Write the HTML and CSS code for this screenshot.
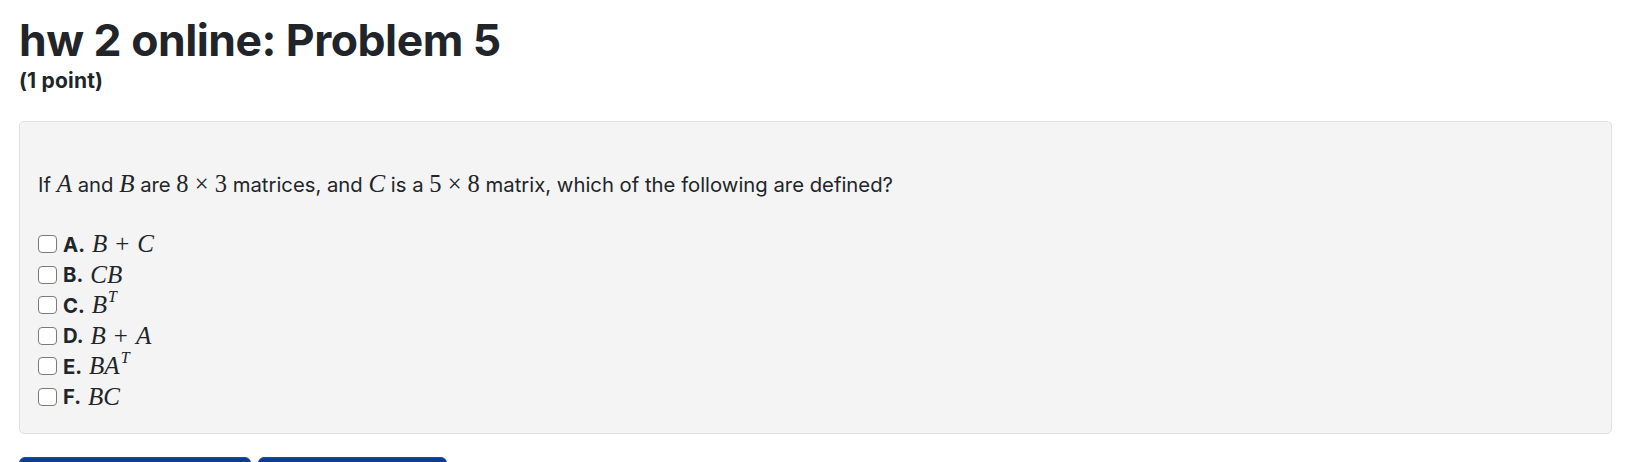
FILE: index.html
```html
<!DOCTYPE html>
<html lang="en">
<head>
  <meta charset="UTF-8">
  <meta name="viewport" content="width=device-width, initial-scale=1.0">
  <title>hw 2 online: Problem 5</title>
  <link rel="stylesheet" href="styles.css">
</head>
<body>
  <div class="page">
    <h1 class="problem-title">hw 2 online: Problem 5</h1>
    <div class="points">(1 point)</div>

    <!-- Problem text -->
    <div class="problem-body">
      <p class="question">
        If <span class="math">A</span> and <span class="math">B</span> are
        <span class="num">8 &times; 3</span> matrices, and <span class="math">C</span> is a
        <span class="num">5 &times; 8</span> matrix, which of the following are defined?
      </p>

      <div class="choices">
        <label><input type="checkbox" name="ans" value="A"><b>A.</b> <span class="math">B</span><span class="op">+</span><span class="math">C</span></label>
        <label><input type="checkbox" name="ans" value="B"><b>B.</b> <span class="math">CB</span></label>
        <label><input type="checkbox" name="ans" value="C"><b>C.</b> <span class="math">B<sup>T</sup></span></label>
        <label><input type="checkbox" name="ans" value="D"><b>D.</b> <span class="math">B</span><span class="op">+</span><span class="math">A</span></label>
        <label><input type="checkbox" name="ans" value="E"><b>E.</b> <span class="math">BA<sup>T</sup></span></label>
        <label><input type="checkbox" name="ans" value="F"><b>F.</b> <span class="math">BC</span></label>
      </div>
    </div>

    <div class="actions">
      <button type="button">Preview My Answers</button>
      <button type="button">Submit Answers</button>
    </div>
  </div>
</body>
</html>
```

FILE: styles.css
```css
body {
  margin: 0;
  font-family: Inter, "Noto Sans", sans-serif;
  color: #212529;
  background: #fff;
}
.page {
  padding: 0 14px 0 19px;
}
.problem-title {
  margin: 0;
  padding-top: 15px;
  font-size: 44.5px;
  font-weight: 700;
  line-height: 1.15;
  letter-spacing: -0.5px;
}
.points {
  font-size: 21px;
  font-weight: 700;
  margin-top: 2px;
  letter-spacing: 0.2px;
}
.problem-body {
  margin-top: 28px;
  background: #f4f4f4;
  border: 1px solid #e1e1e1;
  border-radius: 5px;
  padding: 43px 18px 21px;
}
.question {
  margin: 0 0 26px;
  font-size: 20.3px;
  line-height: 1.5;
}
.math {
  font-family: "Liberation Serif", "DejaVu Serif", serif;
  font-style: italic;
  font-size: 25px;
}
.num {
  font-family: "Liberation Serif", "DejaVu Serif", serif;
  font-size: 24.5px;
}
.op {
  font-family: "Liberation Serif", serif;
  font-size: 25px;
  margin: 0 8px;
}
.math sup {
  font-size: 16px;
  vertical-align: 11px;
  line-height: 0;
  margin-left: 1px;
}
.choices label {
  display: flex;
  align-items: center;
  height: 30.5px;
  font-size: 20.3px;
}
.choices b {
  margin-right: 7px;
}
.choices input {
  appearance: none;
  flex: none;
  width: 19px;
  height: 18px;
  margin: 0 6px 0 0;
  border: 1px solid #7b7b7b;
  border-radius: 4px;
  background: #fff;
}
.actions {
  display: flex;
  gap: 7px;
  margin-top: 23px;
}
.actions button {
  font-family: inherit;
  font-size: 19px;
  color: #fff;
  background: #0d3d8c;
  border: 1px solid #1c4f9e;
  border-radius: 6px;
  padding: 12px 21px 8px;
}
```
